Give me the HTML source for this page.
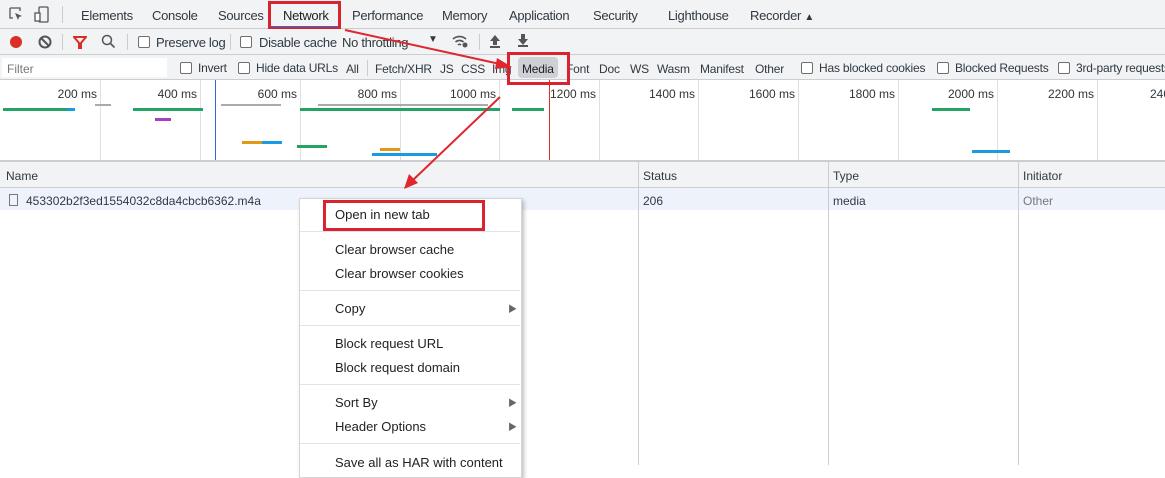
<!DOCTYPE html>
<html><head><meta charset="utf-8"><style>
*{box-sizing:border-box;margin:0;padding:0}
body{width:1165px;height:465px;overflow:hidden;background:#fff;font-family:"Liberation Sans","Noto Sans CJK SC",sans-serif;font-size:12px;color:#303942;position:relative}
.a{position:absolute;white-space:nowrap}
.t13{font-size:13px;letter-spacing:-0.3px}
.f{letter-spacing:-0.2px}
.cb{position:absolute;width:12px;height:12px;border:1px solid #6e6e6e;border-radius:2px;background:#fff}
.bar{position:absolute;height:3px}
.gl{position:absolute;top:80px;height:80px;width:1px;background:#e0e0e0}
.tl{position:absolute;top:87px;font-size:12px;color:#333;text-align:right;width:90px}
.mi{position:absolute;left:335px;font-size:13px;color:#222}
.sep{position:absolute;left:300px;width:220px;height:1px;background:#e3e3e3}
</style></head><body>
<div class="a" style="left:0;top:0;width:1165px;height:29px;background:#f1f3f4;border-bottom:1px solid #cbcdd1"></div>
<svg class="a" style="left:9px;top:7px" width="16" height="16"><path d="M1 1h10v3M1 1v10h3" stroke="#555" fill="none" stroke-width="1.3"/><path d="M6 6l7 3-3 1-1 3z" fill="#555"/></svg>
<svg class="a" style="left:34px;top:6px" width="16" height="18"><rect x="5" y="1" width="9" height="15" rx="1" stroke="#555" fill="none" stroke-width="1.3"/><rect x="1" y="7" width="5" height="8" stroke="#555" fill="#fff" stroke-width="1.3"/></svg>
<div class="a" style="left:62px;top:6px;width:1px;height:17px;background:#ccc"></div>
<div class="a t13" style="left:81px;top:8px">Elements</div>
<div class="a t13" style="left:152px;top:8px">Console</div>
<div class="a t13" style="left:218px;top:8px">Sources</div>
<div class="a t13" style="left:283px;top:8px;color:#202124">Network</div>
<div class="a" style="left:270px;top:26px;width:68px;height:3px;background:#1a73e8"></div>
<div class="a" style="left:268px;top:1px;width:73px;height:29px;border:3px solid #d9232e"></div>
<div class="a t13" style="left:352px;top:8px">Performance</div>
<div class="a t13" style="left:442px;top:8px">Memory</div>
<div class="a t13" style="left:509px;top:8px">Application</div>
<div class="a t13" style="left:593px;top:8px">Security</div>
<div class="a t13" style="left:668px;top:8px">Lighthouse</div>
<div class="a t13" style="left:750px;top:8px">Recorder <span style="font-size:10px">&#9650;</span></div>
<div class="a" style="left:0;top:29px;width:1165px;height:26px;background:#f1f3f4;border-bottom:1px solid #cbcdd1"></div>
<div class="a" style="left:10px;top:36px;width:12px;height:12px;border-radius:50%;background:#d93025"></div>
<svg class="a" style="left:38px;top:35px" width="14" height="14"><circle cx="7" cy="7" r="5.5" stroke="#555" stroke-width="2" fill="none"/><path d="M3 3l8 8" stroke="#555" stroke-width="2"/></svg>
<div class="a" style="left:62px;top:34px;width:1px;height:16px;background:#ccc"></div>
<svg class="a" style="left:73px;top:35px" width="14" height="14"><path d="M1 2h12L8 8v5H6V8z" fill="none" stroke="#d93025" stroke-width="2"/></svg>
<svg class="a" style="left:101px;top:34px" width="15" height="15"><circle cx="6" cy="6" r="4.5" stroke="#555" stroke-width="1.5" fill="none"/><path d="M9.5 9.5l4 4" stroke="#555" stroke-width="1.6"/></svg>
<div class="a" style="left:127px;top:34px;width:1px;height:16px;background:#ccc"></div>
<div class="cb" style="left:138px;top:36px"></div>
<div class="a t13" style="left:156px;top:35px">Preserve log</div>
<div class="a" style="left:230px;top:34px;width:1px;height:16px;background:#ccc"></div>
<div class="cb" style="left:240px;top:36px"></div>
<div class="a t13" style="left:259px;top:35px">Disable cache</div>
<div class="a t13" style="left:342px;top:35px">No throttling</div>
<div class="a" style="left:428px;top:34px;font-size:10px">&#9660;</div>
<svg class="a" style="left:451px;top:33px" width="18" height="16"><path d="M2 6a10 10 0 0 1 13 0M4.5 9a6 6 0 0 1 8 0M7 12a2 2 0 0 1 3 0" stroke="#555" stroke-width="1.6" fill="none"/><circle cx="14" cy="12" r="2.5" fill="#555"/></svg>
<div class="a" style="left:479px;top:34px;width:1px;height:16px;background:#ccc"></div>
<svg class="a" style="left:489px;top:34px" width="12" height="14"><path d="M6 1l5 6H8v4H4V7H1z" fill="#555"/><rect x="1" y="12" width="10" height="2" fill="#555"/></svg>
<svg class="a" style="left:517px;top:33px" width="12" height="14"><path d="M4 1h4v5h3l-5 6-5-6h3z" fill="#555"/><rect x="1" y="12" width="10" height="2" fill="#555"/></svg>
<div class="a" style="left:0;top:55px;width:1165px;height:25px;background:#f1f3f4;border-bottom:1px solid #cbcdd1"></div>
<div class="a" style="left:2px;top:58px;width:165px;height:19px;background:#fff"></div>
<div class="a" style="left:7px;top:62px;color:#777">Filter</div>
<div class="cb" style="left:180px;top:62px"></div><div class="a f" style="left:198px;top:61px">Invert</div>
<div class="cb" style="left:238px;top:62px"></div><div class="a f" style="left:256px;top:61px">Hide data URLs</div>
<div class="a f" style="left:346px;top:62px">All</div>
<div class="a" style="left:367px;top:60px;width:1px;height:16px;background:#ccc"></div>
<div class="a f" style="left:375px;top:62px">Fetch/XHR</div>
<div class="a f" style="left:440px;top:62px">JS</div>
<div class="a f" style="left:461px;top:62px">CSS</div>
<div class="a f" style="left:492px;top:62px">Img</div>
<div class="a" style="left:518px;top:57px;width:40px;height:21px;background:#cdd0d4;border-radius:4px"></div>
<div class="a f" style="left:522px;top:62px;color:#202124">Media</div>
<div class="a f" style="left:566px;top:62px">Font</div>
<div class="a f" style="left:599px;top:62px">Doc</div>
<div class="a f" style="left:630px;top:62px">WS</div>
<div class="a f" style="left:657px;top:62px">Wasm</div>
<div class="a f" style="left:700px;top:62px">Manifest</div>
<div class="a f" style="left:755px;top:62px">Other</div>
<div class="cb" style="left:801px;top:62px"></div><div class="a f" style="left:819px;top:61px">Has blocked cookies</div>
<div class="cb" style="left:937px;top:62px"></div><div class="a f" style="left:955px;top:61px">Blocked Requests</div>
<div class="cb" style="left:1058px;top:62px"></div><div class="a f" style="left:1076px;top:61px">3rd-party requests</div>
<div class="a" style="left:507px;top:52px;width:63px;height:33px;border:3px solid #d9232e"></div>
<div class="gl" style="left:100px"></div><div class="gl" style="left:200px"></div><div class="gl" style="left:300px"></div><div class="gl" style="left:400px"></div><div class="gl" style="left:499px"></div><div class="gl" style="left:599px"></div><div class="gl" style="left:698px"></div><div class="gl" style="left:798px"></div><div class="gl" style="left:898px"></div><div class="gl" style="left:997px"></div><div class="gl" style="left:1097px"></div>
<div class="tl" style="left:7px">200 ms</div><div class="tl" style="left:107px">400 ms</div><div class="tl" style="left:207px">600 ms</div><div class="tl" style="left:307px">800 ms</div><div class="tl" style="left:406px">1000 ms</div><div class="tl" style="left:506px">1200 ms</div><div class="tl" style="left:605px">1400 ms</div><div class="tl" style="left:705px">1600 ms</div><div class="tl" style="left:805px">1800 ms</div><div class="tl" style="left:904px">2000 ms</div><div class="tl" style="left:1004px">2200 ms</div><div class="a" style="left:1150px;top:87px">240</div>
<div class="a" style="left:215px;top:80px;width:1px;height:80px;background:#3367d6"></div>
<div class="a" style="left:549px;top:80px;width:1px;height:80px;background:#d93025"></div>
<div class="bar" style="left:3px;top:108px;width:64px;background:#21a464"></div><div class="bar" style="left:67px;top:108px;width:8px;background:#1a9be0"></div>
<div class="bar" style="left:95px;top:104px;width:16px;background:#aaa;height:2px"></div>
<div class="bar" style="left:133px;top:108px;width:70px;background:#21a464"></div>
<div class="bar" style="left:155px;top:118px;width:16px;background:#a83fc0"></div>
<div class="bar" style="left:221px;top:104px;width:60px;background:#aaa;height:2px"></div>
<div class="bar" style="left:242px;top:141px;width:40px;background:#1a9be0"></div><div class="bar" style="left:242px;top:141px;width:20px;background:#e09a1a"></div>
<div class="bar" style="left:300px;top:108px;width:200px;background:#21a464"></div>
<div class="bar" style="left:318px;top:104px;width:170px;background:#aaa;height:2px"></div>
<div class="bar" style="left:297px;top:145px;width:30px;background:#21a464"></div>
<div class="bar" style="left:372px;top:153px;width:65px;background:#1a9be0"></div>
<div class="bar" style="left:380px;top:148px;width:20px;background:#e09a1a"></div>
<div class="bar" style="left:512px;top:108px;width:32px;background:#21a464"></div>
<div class="bar" style="left:932px;top:108px;width:38px;background:#21a464"></div>
<div class="bar" style="left:972px;top:150px;width:38px;background:#1a9be0"></div>
<div class="a" style="left:0;top:160px;width:1165px;height:2px;background:#cbcdd1"></div>
<div class="a" style="left:0;top:162px;width:1165px;height:26px;background:#f1f3f4;border-bottom:1px solid #cbcdd1"></div>
<div class="a" style="left:0;top:188px;width:1165px;height:22px;background:#eef3fb"></div>
<div class="a" style="left:638px;top:162px;width:1px;height:303px;background:#cbcdd1"></div>
<div class="a" style="left:828px;top:162px;width:1px;height:303px;background:#cbcdd1"></div>
<div class="a" style="left:1018px;top:162px;width:1px;height:303px;background:#cbcdd1"></div>
<div class="a" style="left:6px;top:169px">Name</div>
<div class="a" style="left:643px;top:169px">Status</div>
<div class="a" style="left:833px;top:169px">Type</div>
<div class="a" style="left:1023px;top:169px">Initiator</div>
<div class="a" style="left:9px;top:194px;width:9px;height:12px;border:1px solid #777"></div>
<div class="a" style="left:26px;top:194px">453302b2f3ed1554032c8da4cbcb6362.m4a</div>
<div class="a" style="left:643px;top:194px">206</div>
<div class="a" style="left:833px;top:194px">media</div>
<div class="a" style="left:1023px;top:194px;color:#777">Other</div>
<div class="a" style="left:299px;top:198px;width:223px;height:280px;background:#fff;border:1px solid #d5d5d5;box-shadow:2px 2px 4px rgba(0,0,0,.25)"></div>
<div class="mi" style="top:207px">Open in new tab</div>
<div class="a" style="left:323px;top:200px;width:162px;height:31px;border:3px solid #d9232e"></div>
<div class="sep" style="top:231px"></div>
<div class="mi" style="top:242px">Clear browser cache</div>
<div class="mi" style="top:266px">Clear browser cookies</div>
<div class="sep" style="top:290px"></div>
<div class="mi" style="top:301px">Copy</div><div class="a" style="left:508px;top:302px;font-size:9px;color:#666">&#9654;</div>
<div class="sep" style="top:325px"></div>
<div class="mi" style="top:336px">Block request URL</div>
<div class="mi" style="top:360px">Block request domain</div>
<div class="sep" style="top:384px"></div>
<div class="mi" style="top:395px">Sort By</div><div class="a" style="left:508px;top:396px;font-size:9px;color:#666">&#9654;</div>
<div class="mi" style="top:419px">Header Options</div><div class="a" style="left:508px;top:420px;font-size:9px;color:#666">&#9654;</div>
<div class="sep" style="top:443px"></div>
<div class="mi" style="top:455px">Save all as HAR with content</div>
<svg class="a" style="left:0;top:0" width="1165" height="465">
<line x1="345" y1="30" x2="500" y2="64" stroke="#e0262e" stroke-width="2"/>
<polygon points="512,67 497,58 495,69" fill="#e0262e"/>
<line x1="500" y1="97" x2="413" y2="180" stroke="#e0262e" stroke-width="2"/>
<polygon points="404,189 409,174 418,183" fill="#e0262e"/>
</svg>
</body></html>
